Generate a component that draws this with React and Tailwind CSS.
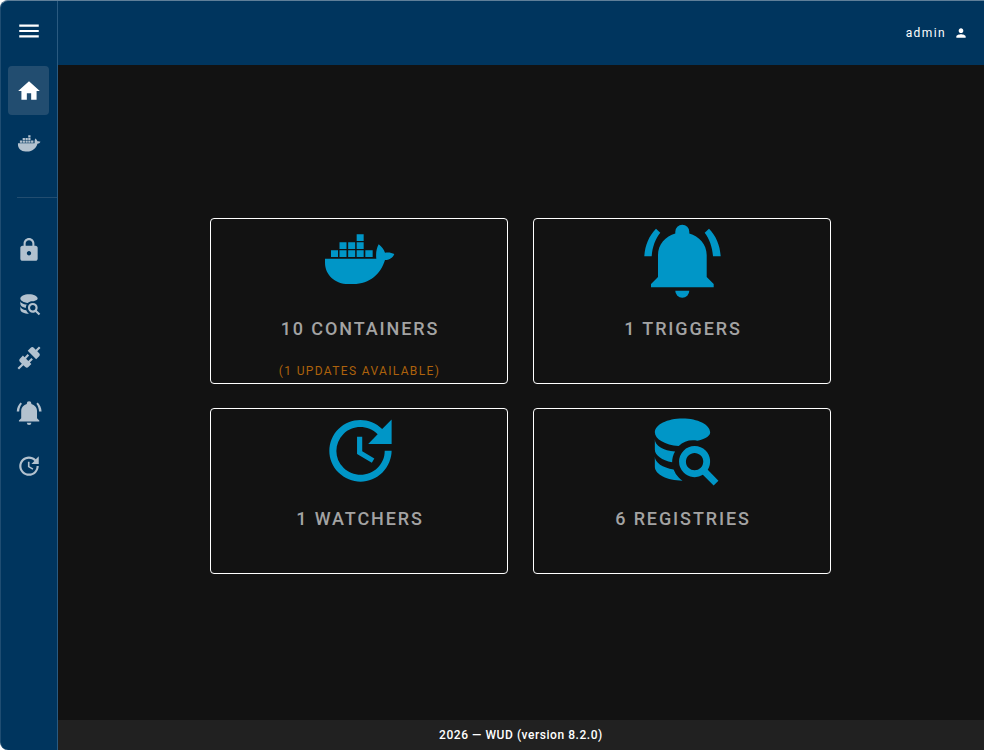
import React from 'react';
import { MdMenu, MdHome, MdLock, MdPerson } from 'react-icons/md';

const DockerIcon = ({ className }) => (
  <svg className={className} viewBox="-0.3 0 24 24" fill="currentColor">
    <path d="M1.5 12.2H16.9C16.7 10.8 16.9 9.2 17.6 7.9C18.4 8.5 19.2 9.4 19.5 10.4C20.6 10.2 21.5 10.4 22.3 10.8C21.8 12 20.7 12.6 19.5 12.6C18.2 16.8 15 19.8 10 19.8H8.5C4.5 19.8 1.5 17 1.5 13.4Z" />
    <path d="M3.3 9.65h2.1v2.05H3.3zM5.85 9.65h2.1v2.05h-2.1zM8.45 9.65h2.1v2.05h-2.1zM11 9.65h2.1v2.05H11zM13.6 9.65h2.2v2.05h-2.2zM5.85 7.3h2.1v2h-2.1zM8.45 7.3h2.1v2h-2.1zM11 7.3h2.1v2H11zM11 4.9h2.1v2H11z" />
  </svg>
);

const BellIcon = ({ className }) => (
  <svg className={className} viewBox="0 0 80 80" fill="currentColor">
    <path d="M40.3 6.7a7 7 0 0 1 7 7v1.8C57 18 64.7 26.5 64.7 37V59L71.7 66V69.3H9V66L16 59V37C16 26.5 23.6 18 33.3 15.5V13.7a7 7 0 0 1 7-7Z" />
    <path d="M33.3 72.7H47.3a7 7 0 0 1-14 0Z" />
    <path d="M2.3 38.3H9.7C10.3 29 13.5 20.5 18.3 14.7L14 10.7C7 18 3 27 2.3 38.3Z" />
    <path d="M78.7 38.3H71C70.4 29 67.2 20.5 62.7 14.7L67 10.7C74 18 78 27 78.7 38.3Z" />
  </svg>
);

const UpdateIcon = ({ className }) => (
  <svg className={className} viewBox="0 0 24 24" fill="currentColor">
    <path d="M21 10.12H14.22L16.96 7.3C14.23 4.6 9.81 4.5 7.08 7.2C4.35 9.91 4.35 14.28 7.08 17C9.81 19.7 14.23 19.7 16.96 17C18.32 15.65 19 14.08 19 12.1H21C21 14.08 20.12 16.65 18.36 18.39C14.85 21.87 9.15 21.87 5.64 18.39C2.14 14.92 2.11 9.28 5.62 5.81C9.13 2.34 14.76 2.34 18.27 5.81L21 3V10.12M12.5 8V12.25L16 14.33L15.28 15.54L11 13V8H12.5Z" />
  </svg>
);

const RegistryIcon = ({ className }) => (
  <svg className={className} viewBox="0 0 24 24" fill="currentColor">
    <path d="M18.68 12.32a4.49 4.49 0 0 0-6.36.01 4.49 4.49 0 0 0 0 6.35 4.5 4.5 0 0 0 5.57.64L21 22.39 22.39 21l-3.09-3.11c1.13-1.77.87-4.09-.62-5.57zm-1.41 4.95c-.98.98-2.56.97-3.54 0-.98-.98-.98-2.56.01-3.54.97-.98 2.55-.98 3.53 0 .98.98.98 2.56 0 3.54z" />
    <path d="M10.9 20.1a6.5 6.5 0 0 1-1.48-2.32C6.27 17.25 4 15.76 4 14v3c0 2.21 3.58 4 8 4-.4-.26-.77-.56-1.1-.9zM4 9v3c0 1.68 2.07 3.12 5 3.7 0-1.11.28-2.19.85-3.14C6.5 12.3 4 10.8 4 9zM12 3C7.58 3 4 4.79 4 7c0 2 3 3.68 6.85 4h.05c1.1-1.07 2.55-1.65 4.1-1.65.44 0 .88.04 1.3.13C18.97 8.8 20 7.97 20 7c0-2.21-3.58-4-8-4z" />
  </svg>
);

const PlugIcon = ({ className }) => (
  <svg className={className} viewBox="0 0 24 24" fill="currentColor">
    <path d="M21.4 7.5c.8.8.8 2.1 0 2.8l-2.8 2.8-7.8-7.8 2.8-2.8c.8-.8 2.1-.8 2.8 0l1.8 1.8 3-3 1.4 1.4-3 3 1.8 1.8zm-5.8 5.8-1.4-1.4-2.8 2.8-2.1-2.1 2.8-2.8-1.4-1.4-2.8 2.8-1.5-1.4-2.8 2.8c-.8.8-.8 2.1 0 2.8l1.8 1.8-4 4 1.4 1.4 4-4 1.8 1.8c.8.8 2.1.8 2.8 0l2.8-2.8-1.4-1.4 2.8-2.9z" />
  </svg>
);

const navIcons = [MdLock, RegistryIcon, PlugIcon, BellIcon, UpdateIcon];

const cards = [
  { icon: DockerIcon, size: 'w-20 h-20', title: '10 CONTAINERS', sub: '(1 UPDATES AVAILABLE)' },
  { icon: BellIcon, size: 'w-20 h-20', title: '1 TRIGGERS' },
  { icon: UpdateIcon, size: 'w-[83px] h-[83px] mt-px ml-[2px]', title: '1 WATCHERS' },
  { icon: RegistryIcon, size: 'w-[83px] h-[83px]', title: '6 REGISTRIES' },
];

function StatCard({ icon: Icon, size, title, sub }) {
  return (
    <div className="h-[166px] rounded-[4px] border border-white flex flex-col items-center">
      <div className="h-20 w-full -mt-px flex justify-center items-start">
        <Icon className={`${size} shrink-0 text-[#0096c7]`} />
      </div>
      <div className="mt-[15px] pl-[2px] text-[18px] leading-8 font-medium tracking-[1.9px] text-[#a3a3a3]">{title}</div>
      {sub && <div className="mt-[18px] pl-[1px] text-[12px] leading-4 tracking-[1.35px] text-[#ad620c]">{sub}</div>}
    </div>
  );
}

export default function App() {
  return (
    <div className="h-[750px] w-[984px] overflow-hidden flex bg-white font-['Roboto',sans-serif]">
      {/* sidebar */}
      <aside className="w-[58px] shrink-0 rounded-l-[8px] bg-[#00355e] border-t border-t-[#5f7f99] border-l border-l-[#1f4d72] border-r border-r-[#2a5a80] flex flex-col items-center">
        <MdMenu className="w-[26px] h-[26px] mt-[17px] text-white" />
        <div className="mt-[22px] -ml-px w-[41px] h-[49px] rounded bg-[#224d70] flex items-center justify-center">
          <MdHome className="w-[26px] h-[26px] text-white" />
        </div>
        <DockerIcon className="w-[26px] h-[26px] mt-[15px] text-[#b3c2cf]" />
        <div className="mt-[41px] ml-[16px] w-[40px] h-px bg-[#224d70]" />
        {navIcons.map((Icon, i) => (
          <Icon key={i} className={`w-[26px] h-[26px] text-[#b3c2cf] ${i === 0 ? 'mt-[39px]' : 'mt-[28px]'}`} />
        ))}
      </aside>

      <div className="flex-1 flex flex-col min-w-0 bg-[#121212]">
        <header className="h-[65px] shrink-0 bg-[#00355e] border-t border-[#5f7f99] flex items-center justify-end pr-[16px]">
          <span className="text-[12px] tracking-[1.4px] text-white">admin</span>
          <MdPerson className="w-[14px] h-[14px] ml-[8px] text-white" />
        </header>
        <main className="flex-1 pt-[153px] pl-[152px]">
          <div className="grid grid-cols-[298px_298px] gap-x-[25px] gap-y-[24px]">
            {cards.map((c) => (
              <StatCard key={c.title} {...c} />
            ))}
          </div>
        </main>
        <footer className="h-[30px] shrink-0 bg-[#212121] flex items-center justify-center text-[12px] font-medium tracking-[0.55px] text-white">
          2026 — WUD (version 8.2.0)
        </footer>
      </div>
    </div>
  );
}
